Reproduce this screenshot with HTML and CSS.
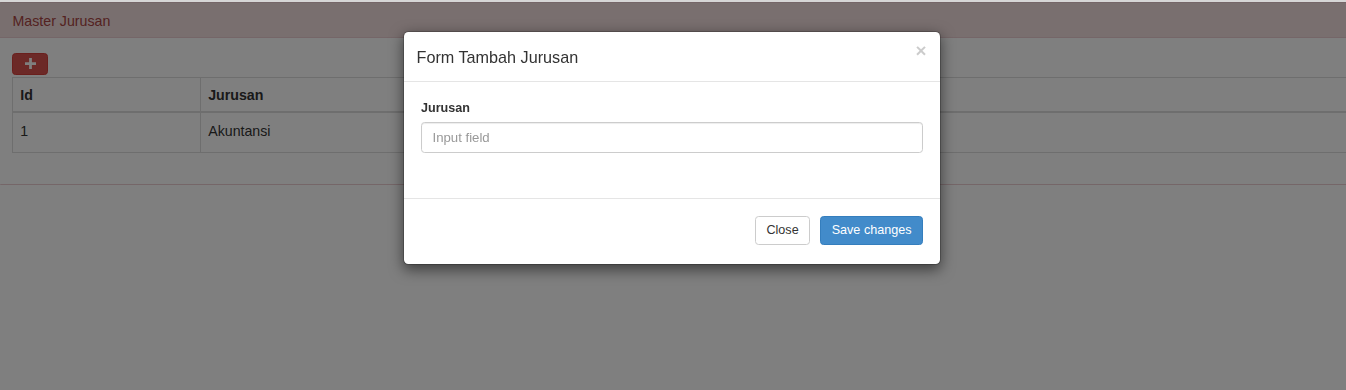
FILE: index.html
```html
<!DOCTYPE html>
<html lang="id">
<head>
<meta charset="utf-8">
<title>Master Jurusan</title>
<link rel="stylesheet" href="styles.css">
</head>
<body>
<div class="topline"></div>
<div class="page">
  <div class="panel">
    <div class="panel-heading">Master Jurusan</div>
    <div class="panel-body">
      <button class="btn-add" type="button" aria-label="Tambah">
        <svg width="11" height="11" viewBox="0 0 12 12"><path d="M4.5 0h3v4.5H12v3H7.5V12h-3V7.5H0v-3h4.5z" fill="#fff"/></svg>
      </button>
      <table class="table">
        <thead>
          <tr><th class="col-id">Id</th><th>Jurusan</th></tr>
        </thead>
        <tbody>
          <tr><td class="col-id">1</td><td>Akuntansi</td></tr>
        </tbody>
      </table>
    </div>
  </div>
</div>
<div class="backdrop"></div>
<div class="modal">
  <div class="modal-header">
    <span class="close">&times;</span>
    <h4 class="modal-title">Form Tambah Jurusan</h4>
  </div>
  <div class="modal-body">
    <div class="form-group">
      <label class="label">Jurusan</label>
      <input class="input" type="text" placeholder="Input field">
    </div>
  </div>
  <div class="modal-footer">
    <button class="btn btn-default" type="button">Close</button>
    <button class="btn btn-primary" type="button">Save changes</button>
  </div>
</div>
</body>
</html>
```
FILE: styles.css
```css
* { box-sizing: border-box; }
html, body { margin: 0; padding: 0; }
body {
  font-family: "Liberation Sans", Arial, Helvetica, sans-serif;
  font-size: 12.6px;
  line-height: 18px;
  color: #333;
  background: #fff;
  overflow: hidden;
  height: 390px;
}
.topline {
  height: 2px;
  background: #d6d6d6;
}
.page {
  margin-left: -3px;
  margin-right: -30px;
}
.panel {
  border: 1px solid #ebccd1;
  border-radius: 3.6px;
  background: #fff;
}
.panel-heading {
  background: #f2dede;
  color: #a94442;
  font-size: 14.2px;
  padding: 9px 14.5px 8px;
  border-bottom: 1px solid #ebccd1;
  height: 35px;
}
.panel-body {
  padding: 13.5px 13.5px 13.5px 14px;
  display: flex;
  flex-direction: column;
  align-items: flex-start;
}
.btn-add {
  width: 36px;
  height: 22px;
  margin: 1px 0 2px 0;
  padding: 0;
  border: 1px solid #d43f3a;
  background: #d9534f;
  border-radius: 3.6px;
  display: flex;
  align-items: center;
  justify-content: center;
}
.table {
  width: 100%;
  border-collapse: collapse;
  border: 1px solid #ddd;
  margin-bottom: 18px;
  font-size: 14.2px;
}
.table th, .table td {
  border: 1px solid #ddd;
  padding: 8.7px 7.2px 6px;
  text-align: left;
  vertical-align: top;
  line-height: 18px;
}
.table th {
  font-weight: bold;
  border-bottom: 2px solid #ddd;
  height: 35px;
}
.table td { height: 40px; }
.col-id { width: 188px; }

.backdrop {
  position: fixed;
  z-index: 10;
  left: 0; right: 0; top: 2px; bottom: 0;
  background: rgba(0, 0, 0, 0.5);
}
.modal {
  position: absolute;
  z-index: 20;
  left: 403px;
  top: 31px;
  width: 538px;
  background: #fff;
  border: 1px solid rgba(0, 0, 0, 0.2);
  border-radius: 5.4px;
  box-shadow: 0 4.5px 13.5px rgba(0, 0, 0, 0.5);
  background-clip: padding-box;
}
.modal-header {
  padding: 13.5px 13.5px 12.5px 12.5px;
  border-bottom: 1px solid #e5e5e5;
  display: flex;
  flex-direction: row-reverse;
  justify-content: space-between;
  align-items: flex-start;
}
.modal-title {
  margin: 0;
  font-size: 16.2px;
  font-weight: normal;
  line-height: 23px;
  color: #333;
}
.close {
  font-size: 18.9px;
  font-weight: bold;
  line-height: 1;
  color: #000;
  opacity: 0.2;
  margin-top: -4px;
  margin-right: 0;
}
.modal-body {
  padding: 17px 17px 31px;
}
.form-group { margin-bottom: 14px; }
.label {
  display: block;
  font-weight: bold;
  margin-bottom: 4.5px;
  color: #333;
}
.input {
  display: block;
  width: 100%;
  height: 31px;
  padding: 5.4px 10.5px;
  font-family: inherit;
  font-size: 13.2px;
  color: #555;
  border: 1px solid #ccc;
  border-radius: 3.6px;
  box-shadow: inset 0 1px 1px rgba(0, 0, 0, 0.075);
  outline: none;
}
.input::placeholder { color: #999; }
.modal-footer {
  padding: 17px 17px 19px;
  border-top: 1px solid #e5e5e5;
  display: flex;
  justify-content: flex-end;
  gap: 10px;
}
.btn {
  height: 29px;
  padding: 0 10.5px;
  font-family: inherit;
  font-size: 12.6px;
  line-height: 18px;
  border-radius: 3.6px;
  border: 1px solid transparent;
}
.btn-default {
  background: #fff;
  border-color: #ccc;
  color: #333;
}
.btn-primary {
  background: #428bca;
  border-color: #357ebd;
  color: #fff;
}
```
